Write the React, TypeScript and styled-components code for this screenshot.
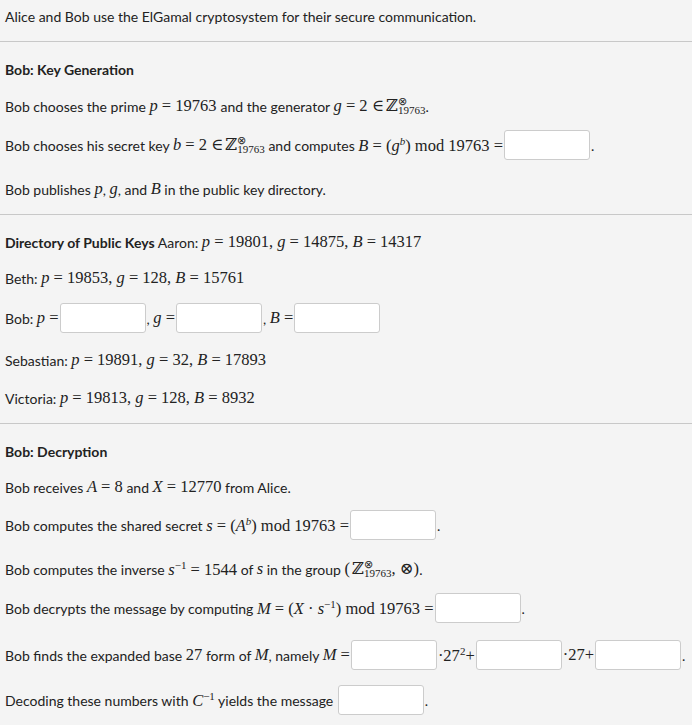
import React from "react";
import styled, { createGlobalStyle } from "styled-components";

const Global = createGlobalStyle`
  body { margin: 0; background: #f4f4f4; font-family: "Segoe UI", Lato, "Liberation Sans", sans-serif; font-size: 14px; color: #222; }
`;
const Page = styled.div`padding: 0 0 20px 5px;`;
const P = styled.div<{ $t: number }>`
  height: 0; margin-top: ${(p) => p.$t}px; display: flex; align-items: center; white-space: pre;
`;
const Rule = styled.hr<{ $t: number }>`border: 0; border-top: 1px solid #c8c8c8; margin: ${(p) => p.$t}px 0 0 -5px;`;
const H = styled.b`font-weight: 700;`;
const M = styled.span`font-family: "Liberation Serif", "DejaVu Serif", serif; font-size: 16.5px; white-space: pre;`;
const I = styled.i`font-style: italic;`;
const Sup = styled.sup`font-size: 11px; vertical-align: 6px;`;
const Box = styled.span`
  display: inline-block; flex: none; width: 84px; height: 28px; background: #fff; border: 1px solid #ccc; border-radius: 3px; margin: 0 1px;
`;
const ZWrap = styled.span`display: inline-flex; align-items: flex-start; margin-left: 2px;`;
const ZScripts = styled.span`
  display: inline-flex; flex-direction: column; font-family: "Liberation Serif", serif; font-size: 11px; line-height: 9px; padding-top: 1px;
`;
const Z = () => (
  <ZWrap>
    <M>ℤ</M>
    <ZScripts><span>⊗</span><span>19763</span></ZScripts>
  </ZWrap>
);

export default function App() {
  return (
    <Page>
      <Global />
      <P $t={16}>Alice and Bob use the ElGamal cryptosystem for their secure communication.</P>
      <Rule $t={25} />
      <P $t={27}><H>Bob: Key Generation</H></P>
      <P $t={37}>Bob chooses the prime <M><I>p</I> = 19763 </M>and the generator <M><I>g</I> = 2 ∈</M><Z />.</P>
      <P $t={39}>Bob chooses his secret key <M><I>b</I> = 2 ∈</M><Z /> and computes <M><I>B</I> = (<I>g</I><Sup><I>b</I></Sup>) mod 19763 =</M><Box />.</P>
      <P $t={44}>Bob publishes <M><I>p</I></M>, <M><I>g</I></M>, and <M><I>B</I></M> in the public key directory.</P>
      <Rule $t={25} />
      <P $t={27}><H>Directory of Public Keys</H> Aaron: <M><I>p</I> = 19801, <I>g</I> = 14875, <I>B</I> = 14317</M></P>
      <P $t={36}>Beth: <M><I>p</I> = 19853, <I>g</I> = 128, <I>B</I> = 15761</M></P>
      <P $t={40}>Bob: <M><I>p</I> =</M><Box />, <M><I>g</I> =</M><Box />, <M><I>B</I> =</M><Box /></P>
      <P $t={42}>Sebastian: <M><I>p</I> = 19891, <I>g</I> = 32, <I>B</I> = 17893</M></P>
      <P $t={38}>Victoria: <M><I>p</I> = 19813, <I>g</I> = 128, <I>B</I> = 8932</M></P>
      <Rule $t={25} />
      <P $t={27}><H>Bob: Decryption</H></P>
      <P $t={36}>Bob receives <M><I>A</I> = 8</M> and <M><I>X</I> = 12770</M> from Alice.</P>
      <P $t={38}>Bob computes the shared secret <M><I>s</I> = (<I>A</I><Sup><I>b</I></Sup>) mod 19763 =</M><Box />.</P>
      <P $t={44}>Bob computes the inverse <M><I>s</I><Sup>−1</Sup> = 1544</M> of <M><I>s</I></M> in the group <M>(</M><Z /><M>, ⊗)</M>.</P>
      <P $t={39}>Bob decrypts the message by computing <M><I>M</I> = (<I>X</I> · <I>s</I><Sup>−1</Sup>) mod 19763 =</M><Box />.</P>
      <P $t={47}>Bob finds the expanded base <M>27</M> form of <M><I>M</I></M>, namely <M><I>M</I> =</M><Box /><M>·27<Sup>2</Sup>+</M><Box /><M>·27+</M><Box />.</P>
      <P $t={45}>Decoding these numbers with <M><I>C</I><Sup>−1</Sup></M> yields the message <Box />.</P>
    </Page>
  );
}
